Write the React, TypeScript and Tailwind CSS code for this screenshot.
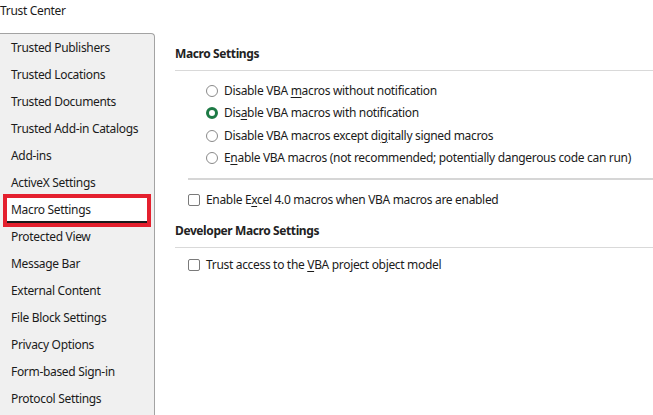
import React, { useState } from "react";

const items = [
  "Trusted Publishers",
  "Trusted Locations",
  "Trusted Documents",
  "Trusted Add-in Catalogs",
  "Add-ins",
  "ActiveX Settings",
  "Macro Settings",
  "Protected View",
  "Message Bar",
  "External Content",
  "File Block Settings",
  "Privacy Options",
  "Form-based Sign-in",
  "Protocol Settings",
];

// label split around the access-key letter: [before, key, after]
const radios: [string, string, string][] = [
  ["Disable VBA ", "m", "acros without notification"],
  ["Dis", "a", "ble VBA macros with notification"],
  ["Disable VBA macros except di", "g", "itally signed macros"],
  ["E", "n", "able VBA macros (not recommended; potentially dangerous code can run)"],
];

function Radio({ checked }: { checked: boolean }) {
  return checked ? (
    <span className="h-[12px] w-[12px] shrink-0 rounded-full border-[3px] border-[#1d7a45] bg-white" />
  ) : (
    <span className="h-[12px] w-[12px] shrink-0 rounded-full border border-[#8a8a8a] bg-white" />
  );
}

function Check() {
  return <span className="h-[12px] w-[12px] shrink-0 rounded-[2px] border border-[#7a7a7a] bg-white" />;
}

export default function App() {
  const [active] = useState("Macro Settings");
  const [choice, setChoice] = useState(1);

  return (
    <div
      className="flex h-[415px] w-[653px] flex-col overflow-hidden bg-white text-[12px] tracking-[-0.32px] text-[#1b1b1b]"
      style={{ fontFamily: '"Noto Sans", "Open Sans", sans-serif' }}
    >
      <div className="h-[33px] pt-[3px] leading-[16px]">Trust Center</div>

      <div className="flex flex-1 min-h-0">
        {/* left nav */}
        <div className="w-[155px] shrink-0 rounded-tr-[4px] border-r border-t border-[#a3a3a3] bg-[#f0f0f0]">
          {items.map((it) =>
            it === active ? (
              <div key={it} className="mx-[3px] mb-[-4px] mt-[-2px] h-[33px] border-[4px] border-[#e4202e]">
                <div className="flex h-full items-center border-b-[2px] border-[#1a1a1a] bg-white pl-[4px] leading-none">
                  {it}
                </div>
              </div>
            ) : (
              <div key={it} className="flex h-[27px] items-center pl-[11px]">
                {it}
              </div>
            )
          )}
        </div>

        {/* right content */}
        <div className="flex-1 pl-[20px] pt-[11px]">
          <div className="flex h-[20px] items-center font-bold tracking-[-0.4px] text-[#222]">Macro Settings</div>
          <div className="mt-[6px] h-px bg-[#d9d9d9]" />

          <div className="mt-[9px] flex flex-col pl-[31px]">
            {radios.map(([a, k, b], i) => (
              <div
                key={i}
                onClick={() => setChoice(i)}
                className="flex h-[22.3px] items-center gap-[6px]"
              >
                <Radio checked={choice === i} />
                <span className="whitespace-nowrap">
                  {a}
                  <span className="underline underline-offset-2">{k}</span>
                  {b}
                </span>
              </div>
            ))}
          </div>

          <div className="ml-[13px] mt-[9px] h-[2px] bg-[#d6d6d6]" />

          <div className="ml-[13px] mt-[11px] flex h-[18px] items-center gap-[6px]">
            <Check />
            <span className="whitespace-nowrap">
              Enable E<span className="underline underline-offset-2">x</span>cel 4.0 macros when VBA macros are enabled
            </span>
          </div>

          <div className="mt-[12px] flex h-[20px] items-center font-bold tracking-[-0.4px] text-[#222]">
            Developer Macro Settings
          </div>
          <div className="mt-[6px] h-px bg-[#d9d9d9]" />

          <div className="ml-[13px] mt-[8px] flex h-[18px] items-center gap-[6px]">
            <Check />
            <span className="whitespace-nowrap">
              Trust access to the <span className="underline underline-offset-2">V</span>BA project object model
            </span>
          </div>
        </div>
      </div>
    </div>
  );
}
